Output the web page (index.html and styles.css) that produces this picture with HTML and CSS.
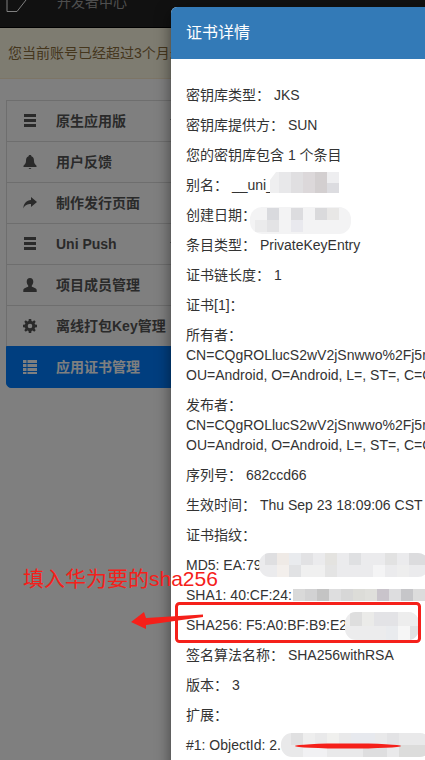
FILE: index.html
```html
<!DOCTYPE html>
<html lang="zh-CN">
<head>
<meta charset="utf-8">
<title>证书详情</title>
<link rel="stylesheet" href="styles.css">
</head>
<body>
<div class="page">
  <header class="topbar">
    <svg class="brand-icon" width="28" height="14" viewBox="0 0 28 14"><path d="M8 -8V11.500H18L27 0" fill="none" stroke="#fff" stroke-width="1"/></svg>
    <span class="brand-text">开发者中心</span>
  </header>
  <div class="alert">您当前账号已经超过3个月未登录</div>
  <ul class="nav">
    <li class="nav-item"><svg class="ico" viewBox="0 0 14 14"><path d="M1 0h12v3H1zM1 5h12v3H1zM1 10h12v3H1z"/></svg><span class="label">原生应用版</span><i class="caret"></i></li>
    <li class="nav-item"><svg class="ico" viewBox="0 0 14 14"><path d="M7 0c1 0 1.400.6 1.400 1.200C10.600 1.900 11 3.600 11 6c0 2.300 1.200 3.600 2.500 4.700V12H.5v-1.300C1.800 9.600 3 8.300 3 6c0-2.400.4-4.100 2.600-4.800C5.600.6 6 0 7 0zM5.600 13h2.800C8.200 13.700 7.700 14 7 14s-1.200-.3-1.400-1z"/></svg><span class="label">用户反馈</span></li>
    <li class="nav-item"><svg class="ico" viewBox="0 0 14 14"><path d="M8 1l6 5-6 5V8C4.500 8 2 9 .3 12.500.5 7.500 3.500 4.300 8 4z"/></svg><span class="label">制作发行页面</span></li>
    <li class="nav-item"><svg class="ico" viewBox="0 0 14 14"><path d="M1 0h12v3H1zM1 5h12v3H1zM1 10h12v3H1z"/></svg><span class="label">Uni Push</span><i class="caret"></i></li>
    <li class="nav-item"><svg class="ico" viewBox="0 0 14 14"><path d="M7 0c2.200 0 3.300 1.600 3.300 3.700 0 1.500-.6 2.900-1.500 3.700v1.300c1.800.6 4.700 1.500 4.900 3.100V14H.3v-2.200c.2-1.600 3.100-2.500 4.900-3.100V7.400C4.300 6.600 3.700 5.200 3.700 3.700 3.700 1.600 4.800 0 7 0z"/></svg><span class="label">项目成员管理</span></li>
    <li class="nav-item"><svg class="ico" viewBox="0 0 14 14"><path fill-rule="evenodd" d="M5.800 0h2.400l.3 1.900 1.100.5L11.200 1.300l1.500 1.500-1.100 1.600.5 1.100 1.900.3v2.400l-1.900.3-.5 1.100 1.100 1.600-1.500 1.500-1.600-1.100-1.100.5-.3 1.900H5.800l-.3-1.900-1.100-.5-1.600 1.100-1.500-1.500 1.100-1.600-.5-1.100L0 8.200V5.800l1.900-.3.5-1.100L1.300 2.800l1.500-1.500 1.600 1.100 1.100-.5zM7 4.700a2.300 2.300 0 1 0 0 4.600 2.300 2.300 0 0 0 0-4.600z"/></svg><span class="label">离线打包Key管理</span></li>
    <li class="nav-item active"><svg class="ico" viewBox="0 0 14 14"><path d="M0 0h3.500v3H0zM4.500 0H14v3H4.500zM0 4h3.500v3H0zM4.500 4H14v3H4.500zM0 8h3.500v3H0zM4.500 8H14v3H4.500zM0 12h3.500v2H0zM4.500 12H14v2H4.500z"/></svg><span class="label">应用证书管理</span></li>
  </ul>
</div>
<div class="backdrop"></div>
<div class="modal">
  <div class="modal-header">证书详情</div>
  <div class="modal-body">
    <p>密钥库类型：&nbsp;JKS</p>
    <p>密钥库提供方：&nbsp;SUN</p>
    <p>您的密钥库包含 1 个条目</p>
    <p>别名：&nbsp;__uni_</p>
    <p>创建日期：</p>
    <p>条目类型：&nbsp;PrivateKeyEntry</p>
    <p>证书链长度：&nbsp;1</p>
    <p>证书[1]：</p>
    <p>所有者：<br>CN=CQgROLlucS2wV2jSnwwo%2Fj5r<br>OU=Android, O=Android, L=, ST=, C=C</p>
    <p>发布者：<br>CN=CQgROLlucS2wV2jSnwwo%2Fj5r<br>OU=Android, O=Android, L=, ST=, C=C</p>
    <p>序列号：&nbsp;682ccd66</p>
    <p>生效时间：&nbsp;Thu Sep 23 18:09:06 CST</p>
    <p>证书指纹：</p>
    <p>MD5: EA:79</p>
    <p>SHA1: 40:CF:24:</p>
    <p>SHA256: F5:A0:BF:B9:E2</p>
    <p>签名算法名称：&nbsp;SHA256withRSA</p>
    <p>版本：&nbsp;3</p>
    <p>扩展：</p>
    <p>#1: ObjectId: 2.</p>
  </div>
</div>
<svg class="annotations" width="425" height="760" viewBox="0 0 425 760">
  <defs>
    <clipPath id="c1"><rect x="259" y="553" width="170" height="24" rx="11"/></clipPath>
    <clipPath id="c3"><rect x="345" y="612" width="74" height="28" rx="11"/></clipPath>
    <clipPath id="c4"><rect x="281" y="733" width="150" height="24" rx="11"/></clipPath>
    <clipPath id="c5"><path d="M270 180l6-8h63v21h-69z"/></clipPath>
    <clipPath id="c6"><rect x="250" y="207" width="101" height="27" rx="12"/></clipPath>
  </defs>
  <g clip-path="url(#c5)">
    <rect x="270" y="172" width="69" height="21" fill="#efeff0"/>
    <rect x="279" y="172" width="12" height="21" fill="#e8e8ea"/>
    <rect x="291" y="172" width="12" height="21" fill="#e0dfe1"/>
    <rect x="303" y="172" width="12" height="21" fill="#dcd8da"/>
    <rect x="315" y="172" width="12" height="21" fill="#d3cfd0"/>
    <rect x="327" y="172" width="12" height="11" fill="#eeeef0"/>
    <rect x="327" y="183" width="12" height="10" fill="#dcdce0"/>
  </g>
  <g clip-path="url(#c6)">
    <rect x="250" y="207" width="101" height="27" fill="#f3f3f4"/>
    <rect x="267" y="208" width="12" height="12" fill="#d9dade"/>
    <rect x="267" y="220" width="12" height="12" fill="#e3e3e5"/>
    <rect x="291" y="208" width="12" height="12" fill="#dcdcdf"/>
    <rect x="291" y="220" width="12" height="12" fill="#e9e9ee"/>
    <rect x="315" y="208" width="12" height="12" fill="#dadadc"/>
    <rect x="327" y="208" width="12" height="12" fill="#e8e7e6"/>
    <rect x="255" y="220" width="12" height="12" fill="#ebebec"/>
  </g>
  <g clip-path="url(#c1)">
    <rect x="259" y="553" width="170" height="24" fill="#ebebed"/>
    <rect x="265" y="553" width="12" height="12" fill="#dfdfe1"/>
    <rect x="277" y="553" width="12" height="12" fill="#efeae6"/>
    <rect x="289" y="553" width="12" height="12" fill="#e9ebee"/>
    <rect x="301" y="553" width="12" height="12" fill="#e2e2e4"/>
    <rect x="325" y="553" width="12" height="12" fill="#e4e3e0"/>
    <rect x="349" y="553" width="12" height="12" fill="#dfe0e2"/>
    <rect x="385" y="553" width="12" height="12" fill="#e2e2e2"/>
    <rect x="409" y="553" width="16" height="12" fill="#dcdcde"/>
    <rect x="277" y="565" width="12" height="12" fill="#f3efec"/>
    <rect x="289" y="565" width="12" height="12" fill="#e1e2e4"/>
    <rect x="301" y="565" width="24" height="12" fill="#f0f0f0"/>
    <rect x="325" y="565" width="12" height="12" fill="#e4e4e4"/>
    <rect x="373" y="565" width="12" height="12" fill="#f4f4f5"/>
    <rect x="397" y="565" width="12" height="12" fill="#eeeeee"/>
  </g>
  <g>
    <rect x="293" y="589" width="132" height="12" fill="#dcdcdc"/>
    <rect x="293" y="589" width="12" height="12" fill="#d9d9d9"/>
    <rect x="305" y="589" width="12" height="12" fill="#d2d2d3"/>
    <rect x="317" y="589" width="12" height="12" fill="#c4c4c4"/>
    <rect x="329" y="589" width="12" height="12" fill="#dededf"/>
    <rect x="341" y="589" width="12" height="12" fill="#d7d7d7"/>
    <rect x="353" y="589" width="12" height="12" fill="#dcdcd8"/>
    <rect x="365" y="589" width="12" height="12" fill="#dfdfdb"/>
    <rect x="377" y="589" width="12" height="12" fill="#c9c4cb"/>
    <rect x="389" y="589" width="12" height="12" fill="#dddddf"/>
    <rect x="401" y="589" width="12" height="12" fill="#c6c6c9"/>
    <rect x="413" y="589" width="12" height="12" fill="#dcdcdc"/>
  </g>
  <g clip-path="url(#c3)">
    <rect x="345" y="612" width="74" height="28" fill="#ececed"/>
    <rect x="350" y="612" width="12" height="14" fill="#dedede"/>
    <rect x="362" y="612" width="12" height="14" fill="#ebebe9"/>
    <rect x="374" y="612" width="24" height="14" fill="#e3e3e6"/>
    <rect x="398" y="612" width="21" height="14" fill="#ededed"/>
    <rect x="386" y="626" width="12" height="14" fill="#e9ebee"/>
    <rect x="398" y="626" width="12" height="14" fill="#f6f6f6"/>
    <rect x="410" y="626" width="9" height="14" fill="#e2e2e2"/>
  </g>
  <g clip-path="url(#c4)">
    <rect x="281" y="733" width="150" height="24" fill="#e9e9ea"/>
    <rect x="291" y="733" width="12" height="12" fill="#e0e0e1"/>
    <rect x="303" y="733" width="12" height="12" fill="#eeeeee"/>
    <rect x="327" y="733" width="12" height="12" fill="#f0f0ee"/>
    <rect x="351" y="733" width="24" height="12" fill="#e7e9ee"/>
    <rect x="387" y="733" width="12" height="12" fill="#e3e3e5"/>
    <rect x="303" y="745" width="24" height="12" fill="#f1f1f3"/>
    <rect x="363" y="745" width="24" height="12" fill="#dededf"/>
    <rect x="399" y="745" width="26" height="12" fill="#dcdcdb"/>
  </g>
  <rect class="mark" x="176.500" y="603.500" width="243" height="38" rx="3"/>
  <polygon class="ink" points="131,622 144,612 146,618 203,614.500 203,617 146,625 146,629"/>
  <ellipse class="ink" cx="348" cy="746" rx="53" ry="2.600"/>
</svg>
<div class="note">填入华为要的sha256</div>
</body>
</html>
```
FILE: styles.css
```css
* { box-sizing: border-box; }
html, body { margin: 0; height: 760px; overflow: hidden; }
body {
  position: relative;
  background: #fff;
  color: #333;
  font: 14px/20px "Liberation Sans", "Noto Sans CJK SC", sans-serif;
}
.topbar {
  display: flex;
  height: 28px;
  overflow: hidden;
  background: #222;
  border-bottom: 1px solid #000;
}
.brand-icon { flex: none; margin-left: -1px; }
.brand-text {
  margin: -8px 0 0 30px;
  height: 20px;
  color: #9d9d9d;
  font-size: 14px;
  line-height: 20px;
}
.alert {
  height: 51px;
  padding: 15px 8px;
  background: #fcf8e3;
  border-bottom: 1px solid #faebcc;
  color: #8a6d3b;
  white-space: nowrap;
}
.nav {
  width: 175px;
  margin: 21px 0 0 6px;
  padding: 0;
  list-style: none;
}
.nav-item {
  display: flex;
  align-items: center;
  height: 42px;
  margin-bottom: -1px;
  padding-left: 16px;
  background: #fff;
  border: 1px solid #ddd;
  color: #555;
  font-weight: 700;
  white-space: nowrap;
}
.nav-item:last-child { margin-bottom: 0; }
.active {
  background: #007dff;
  border-color: #007dff;
  border-radius: 0 0 5px 5px;
  color: #fff;
}
.ico { flex: none; width: 14px; height: 14px; fill: currentColor; }
.label { flex: 1; margin-left: 19px; }
.caret {
  flex: none;
  width: 0;
  height: 0;
  margin-right: 2px;
  border-top: 4px solid #555;
  border-left: 4px solid transparent;
  border-right: 4px solid transparent;
}
.backdrop {
  position: absolute;
  inset: 0;
  background: rgba(0, 0, 0, .5);
}
.modal {
  position: absolute;
  top: 7px;
  left: 171px;
  width: 600px;
  height: 800px;
  background: #fff;
  border-radius: 6px;
  box-shadow: 0 5px 15px rgba(0, 0, 0, .5);
  overflow: hidden;
}
.modal-header {
  height: 52px;
  padding: 15px;
  background: #337ab7;
  color: #fff;
  font-size: 16px;
  line-height: 22px;
}
.modal-body { padding: 26px 15px; }
.modal-body p { margin: 0 0 10px; white-space: nowrap; }
.annotations { position: absolute; top: 0; left: 0; }
.mark { fill: none; stroke: #f5201a; stroke-width: 3; }
.ink { fill: #f5201a; }
.note {
  position: absolute;
  top: 566px;
  left: 23px;
  color: #f5201a;
  font-size: 21px;
  line-height: 26px;
  white-space: nowrap;
}
```
